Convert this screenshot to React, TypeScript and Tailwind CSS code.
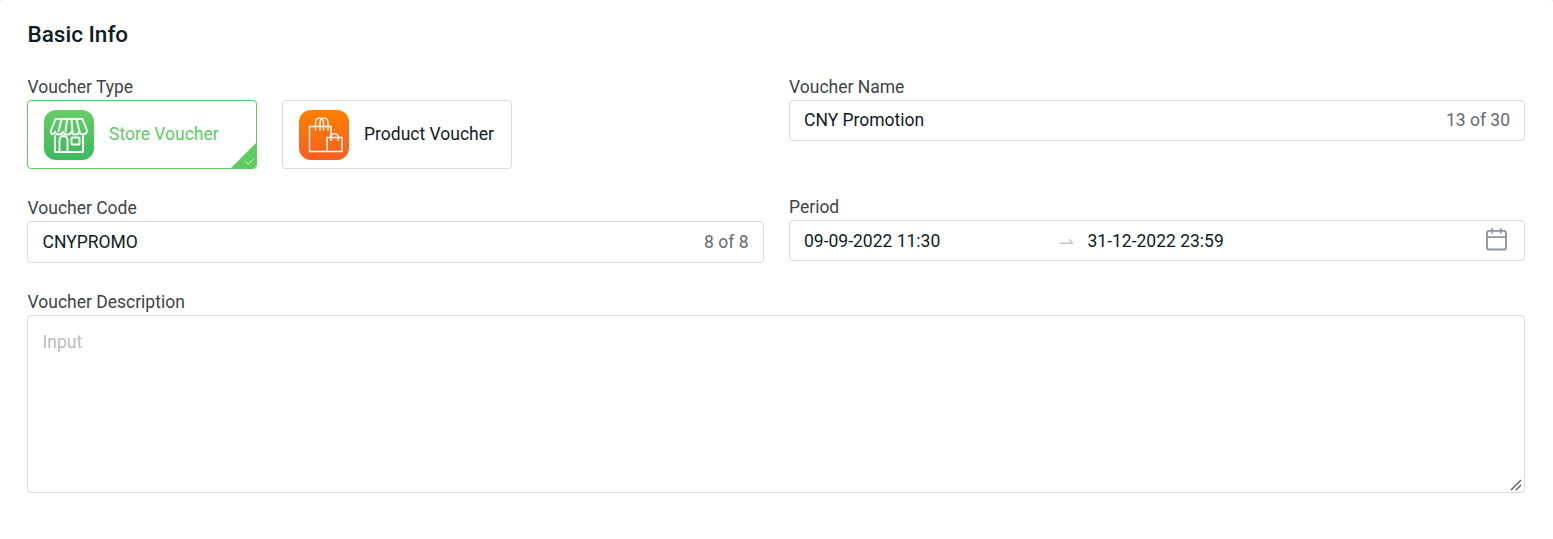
const font = "font-['Roboto',sans-serif]";

function StoreIcon() {
  return (
    <svg viewBox="0 0 50 50" className="w-[50px] h-[50px] rounded-xl shrink-0" fill="none" stroke="#fff" strokeWidth="1.9" strokeLinecap="round" strokeLinejoin="round">
      <defs>
        <linearGradient id="g1" x1="0" y1="0" x2="0" y2="1">
          <stop offset="0" stopColor="#66cf64" />
          <stop offset="1" stopColor="#3cb95f" />
        </linearGradient>
      </defs>
      <rect width="50" height="50" fill="url(#g1)" stroke="none" />
      <path d="M11.500 9h27L43 20.500c0 4.500-6.300 5-7.600 1.200-1.200 3.800-6.900 3.800-8 0-1.200 3.800-7.200 3.800-8.400 0-1.100 3.800-6.800 3.800-8 0C9.700 25.500 6.500 24.500 7 20.500z" />
      <path d="M17.500 9.500l-3 12M23 9.500l-1.500 12M27.500 9.500l1 12M32.500 9.500l3 12" />
      <path d="M11 26v16h28V26" />
      <path d="M15.500 42V30a4 4 0 0 1 8 0v12" />
      <rect x="27.500" y="27.500" width="8" height="7" rx="1" />
    </svg>
  );
}

function BagIcon() {
  return (
    <svg viewBox="0 0 50 50" className="w-[50px] h-[50px] rounded-xl shrink-0" fill="none" stroke="#fff" strokeWidth="1.4" strokeLinecap="round" strokeLinejoin="round">
      <defs>
        <linearGradient id="g2" x1="0" y1="0" x2="0" y2="1">
          <stop offset="0" stopColor="#ff8000" />
          <stop offset="1" stopColor="#f55f22" />
        </linearGradient>
      </defs>
      <rect width="50" height="50" fill="url(#g2)" stroke="none" />
      <path d="M28 41.500H10.500V16.500h21.500v10.500" />
      <path d="M16.500 20V13c0-6.500 8-6.500 8 0v7" />
      <path d="M21 20V13c0-6.500 8-6.500 8 0v7" />
      <path d="M28 27.500h15v14H28z" />
      <path d="M32 30.500v-3.500c0-4.500 7-4.500 7 0v3.500" />
    </svg>
  );
}

function CalendarIcon() {
  return (
    <svg viewBox="0 0 22 24" className="mb-[3px] w-[21px] h-[23px]" fill="none" stroke="#8b999f" strokeWidth="2" strokeLinecap="round" strokeLinejoin="round">
      <rect x="1" y="3" width="20" height="19.500" rx="2.500" />
      <path d="M1 9.500h20M6.500 1v4M15.500 1v4" />
    </svg>
  );
}

function Label({ children }: { children: React.ReactNode }) {
  return <div className="h-[23px] text-[17.5px] leading-[20px] pl-[0.5px] text-[#3e4448]">{children}</div>;
}

function CountInput({ value, count, height }: { value: string; count: string; height: string }) {
  return (
    <div className={`flex items-center rounded border border-[#dbdbdb] pl-[14.5px] pr-[14px] ${height}`}>
      <input readOnly value={value} className="flex-1 min-w-0 bg-transparent text-[17.5px] text-[#0f1c24] outline-none" />
      <span className="text-[17.5px] text-[#666b70]">{count}</span>
    </div>
  );
}

export default function App() {
  return (
    <div className={`${font} h-[539px] overflow-hidden bg-[#f0f0f0]`}>
      <div className="h-[539px] rounded-t-[4px] bg-white pt-5 pl-[27px] pr-[28px]">
        <h2 className="h-[29px] pl-[0.5px] text-[22.5px] font-medium leading-[28px] text-[#0f1c24]">Basic Info</h2>
        <div className="mt-[28px] grid grid-cols-2 gap-x-[25px]">
          <div>
            <Label>Voucher Type</Label>
            <div className="flex gap-[25px]">
              <div className="relative flex h-[69px] w-[230px] items-center gap-[15px] overflow-hidden rounded border border-[#5ccd5e] pl-4">
                <StoreIcon />
                <span className="text-[17.5px] text-[#5ccd5e]">Store Voucher</span>
                <div className="absolute bottom-0 right-0 h-[25px] w-[25px] bg-[#5ccd5e] [clip-path:polygon(100%_0,100%_100%,0_100%)]">
                  <svg viewBox="0 0 12 8" className="absolute right-[1px] bottom-[3px] h-[7px] w-[11px]" fill="none" stroke="#fff" strokeWidth="0.900">
                    <path d="M1 4l3.500 3L11 1" />
                  </svg>
                </div>
              </div>
              <div className="flex h-[69px] w-[230px] items-center gap-[15px] rounded border border-[#dbdbdb] pl-4">
                <BagIcon />
                <span className="text-[17.5px] text-[#0f1c24]">Product Voucher</span>
              </div>
            </div>
            <div className="mt-[29px]">
              <Label>Voucher Code</Label>
              <CountInput value="CNYPROMO" count="8 of 8" height="h-[42px]" />
            </div>
          </div>
          <div>
            <Label>Voucher Name</Label>
            <CountInput value="CNY Promotion" count="13 of 30" height="h-[41px]" />
            <div className="mt-[56px]">
              <Label>Period</Label>
              <div className="flex h-[41px] items-center rounded border border-[#dbdbdb] pl-[14.5px] pr-[17px] pt-[1px]">
                <span className="w-[253px] text-[17.5px] text-[#0f1c24]">09-09-2022 11:30</span>
                <svg viewBox="0 0 1024 1024" className="h-[19px] w-[19px] text-[#c4c4c4]" fill="currentColor">
                  <path d="M873.100 596.200l-164-208A32 32 0 0 0 684 376h-64.800c-6.700 0-10.400 7.700-6.300 13l144.300 183H152c-4.400 0-8 3.600-8 8v60c0 4.400 3.600 8 8 8h695.900c26.800 0 41.700-30.800 25.200-51.800z" />
                </svg>
                <span className="ml-[11.5px] flex-1 text-[17.5px] text-[#0f1c24]">31-12-2022 23:59</span>
                <CalendarIcon />
              </div>
            </div>
          </div>
        </div>
        <div className="mt-[29px]">
          <Label>Voucher Description</Label>
          <div className="relative">
            <textarea
              placeholder="Input"
              className="block h-[178px] w-full resize-none rounded border border-[#dbdbdb] py-[14px] pl-[14.5px] pr-[14px] text-[17.5px] leading-[24px] outline-none placeholder:text-[#c0bcbc]"
            />
            <svg viewBox="0 0 12 12" className="absolute right-[3px] bottom-[2px] h-3 w-3" fill="none" stroke="#555" strokeWidth="1.300">
              <path d="M1 11L11 1M6 11l5-5" />
            </svg>
          </div>
        </div>
      </div>
    </div>
  );
}
